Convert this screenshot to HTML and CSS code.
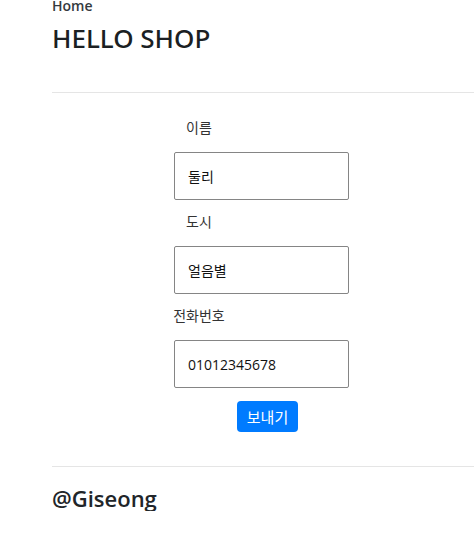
FILE: index.html
```html
<!DOCTYPE html>
<html lang="ko">
<head>
<meta charset="utf-8">
<title>HELLO SHOP</title>
<link rel="stylesheet" href="styles.css">
</head>
<body>
<div class="page">
  <header class="header">
    <a class="home" href="#">Home</a>
    <h1 class="title">HELLO SHOP</h1>
  </header>
  <hr class="rule">
  <form class="form">
    <div class="field">
      <label class="label">이름</label>
      <input class="input" type="text" value="둘리">
    </div>
    <div class="field">
      <label class="label">도시</label>
      <input class="input" type="text" value="얼음별">
    </div>
    <div class="field">
      <label class="label">전화번호</label>
      <input class="input" type="text" value="01012345678">
    </div>
    <div class="actions">
      <button class="btn" type="button">보내기</button>
    </div>
  </form>
  <hr class="rule rule-bottom">
  <footer class="footer">@Giseong</footer>
</div>
</body>
</html>
```
FILE: styles.css
```css
html, body {
  margin: 0;
  padding: 0;
  background: #fff;
}
body {
  font-family: "Open Sans", "Noto Sans CJK KR", sans-serif;
  color: #212529;
}
.page {
  padding-left: 52px;
}
.header {
  display: flex;
  flex-direction: column;
}
.home {
  font-size: 14px;
  line-height: 14px;
  font-weight: 600;
  color: #343a40;
  text-decoration: none;
  margin-top: -1px;
}
.title {
  margin: 9px 0 0;
  font-family: "Noto Sans", "Noto Sans CJK KR", sans-serif;
  font-size: 26px;
  line-height: 32px;
  font-weight: 500;
  color: #1b1f23;
}
.rule {
  margin: 38px 0 0;
  border: 0;
  border-top: 1px solid rgba(0,0,0,0.1);
}
.form {
  display: flex;
  flex-direction: column;
  gap: 12px;
  margin: 25px 0 0 122px;
  width: 175px;
}
.field {
  display: flex;
  flex-direction: column;
}
.label {
  display: block;
  width: 60px;
  margin-left: -5px;
  text-align: center;
  font-size: 14px;
  line-height: 20px;
  color: #333;
  margin-bottom: 14px;
  white-space: nowrap;
}
.input {
  box-sizing: border-box;
  width: 175px;
  height: 48px;
  border: 1px solid #858585;
  border-radius: 2px;
  padding: 0 13px;
  font-family: "Open Sans", "Noto Sans CJK KR", sans-serif;
  font-size: 14px;
  color: #111;
  background: #fff;
}
.actions {
  display: flex;
  justify-content: flex-start;
  padding-left: 63px;
  margin-top: 1px;
}
.btn {
  width: 61px;
  height: 31px;
  border: 0;
  border-radius: 4px;
  background: #007bff;
  color: #fff;
  font-family: "Open Sans", "Noto Sans CJK KR", sans-serif;
  font-size: 15px;
  padding: 0;
}
.rule-bottom {
  margin-top: 34px;
}
.footer {
  margin-top: 18px;
  font-size: 22px;
  line-height: 26px;
  font-weight: 600;
  color: #212529;
}
```
